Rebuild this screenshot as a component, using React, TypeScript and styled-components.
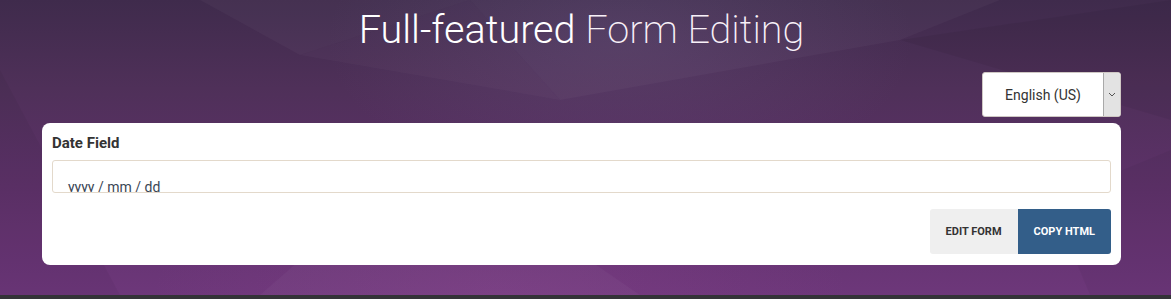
import styled, { createGlobalStyle } from "styled-components";

const GlobalStyle = createGlobalStyle`
  html, body {
    margin: 0;
    padding: 0;
    background: #343338;
  }
  * {
    box-sizing: border-box;
  }
`;

const Hero = styled.section`
  position: relative;
  height: 295px;
  padding: 0 50px 0 42px;
  overflow: hidden;
  background:
    radial-gradient(ellipse 420px 220px at 620px 40px, rgba(120, 100, 150, 0.22), transparent 70%),
    radial-gradient(ellipse 500px 200px at 500px 300px, rgba(150, 70, 150, 0.25), transparent 70%),
    linear-gradient(180deg, #3f2b4c 0%, #4f3059 30%, #5e316a 65%, #6d377a 100%);
  font-family: Roboto, "Liberation Sans", sans-serif;
`;

const Facets = styled.svg`
  position: absolute;
  inset: 0;
  width: 100%;
  height: 100%;
  pointer-events: none;
`;

const Content = styled.div`
  position: relative;
  display: flex;
  flex-direction: column;
`;

const Title = styled.h1`
  margin: 0;
  padding-top: 6px;
  text-align: center;
  font-size: 39.6px;
  line-height: 48px;
  font-weight: 300;
  color: #ffffff;
`;

const Accent = styled.span`
  font-weight: 200;
  color: #f8f0f8;
`;

const LangRow = styled.div`
  display: flex;
  justify-content: flex-end;
  margin-top: 18px;
`;

const LangSelect = styled.div`
  display: flex;
  width: 139px;
  height: 45px;
  background: #ffffff;
  border: 1px solid #cfc8c4;
  border-radius: 3px;
  overflow: hidden;
`;

const LangLabel = styled.div`
  flex: 1;
  display: flex;
  align-items: center;
  justify-content: center;
  font-size: 14px;
  color: #333333;
`;

const LangArrow = styled.div`
  width: 17px;
  display: flex;
  align-items: center;
  justify-content: center;
  background: #e3e3e3;
  border-left: 1px solid #a9a9a9;
`;

const Card = styled.div`
  margin-top: 6px;
  background: #ffffff;
  border-radius: 8px;
  padding: 12px 10px 11px 10px;
  display: flex;
  flex-direction: column;
`;

const FieldLabel = styled.label`
  font-size: 15px;
  font-weight: 700;
  color: #333333;
  line-height: 17px;
`;

const DateInput = styled.div`
  margin-top: 8px;
  height: 33px;
  border: 1px solid #e3d9cb;
  border-radius: 3px;
  padding: 18px 0 0 15px;
  overflow: hidden;
  font-size: 14px;
  line-height: 17px;
  color: #3a4655;
`;

const Actions = styled.div`
  display: flex;
  justify-content: flex-end;
  margin-top: 16px;
`;

const Button = styled.button<{ $primary?: boolean }>`
  height: 45px;
  border: none;
  padding: 0 16px;
  font-family: Roboto, "Liberation Sans", sans-serif;
  font-size: 11px;
  font-weight: 700;
  text-transform: uppercase;
  background: ${p => (p.$primary ? "#335e89" : "#efefef")};
  color: ${p => (p.$primary ? "#ffffff" : "#333333")};
  border-radius: ${p => (p.$primary ? "0 3px 3px 0" : "3px 0 0 3px")};
`;

const Footer = styled.div`
  height: 4px;
  background: #343338;
`;

export default function App() {
  return (
    <>
      <GlobalStyle />
      <Hero>
        <Facets viewBox="0 0 1171 295" preserveAspectRatio="none">
          <polygon points="200,0 470,0 300,55" fill="rgba(255,255,255,0.03)" />
          <polygon points="300,55 470,0 560,100" fill="rgba(255,255,255,0.025)" />
          <polygon points="560,100 900,40 1000,0 470,0" fill="rgba(255,255,255,0.03)" />
          <polygon points="0,70 120,295 0,295" fill="rgba(0,0,0,0.04)" />
          <polygon points="900,40 1171,0 1171,120" fill="rgba(0,0,0,0.05)" />
          <polygon points="1050,200 1171,150 1171,295 1090,295" fill="rgba(0,0,0,0.04)" />
          <polygon points="300,260 560,240 640,295 260,295" fill="rgba(255,255,255,0.03)" />
        </Facets>
        <Content>
          <Title>
            Full-featured <Accent>Form Editing</Accent>
          </Title>
          <LangRow>
            <LangSelect>
              <LangLabel>English (US)</LangLabel>
              <LangArrow>
                <svg width="8" height="5" viewBox="0 0 8 5">
                  <path d="M1 1 L4 4 L7 1" fill="none" stroke="#555" strokeWidth="1" />
                </svg>
              </LangArrow>
            </LangSelect>
          </LangRow>
          <Card>
            <FieldLabel>Date Field</FieldLabel>
            <DateInput>yyyy / mm / dd</DateInput>
            <Actions>
              <Button>Edit Form</Button>
              <Button $primary>Copy HTML</Button>
            </Actions>
          </Card>
        </Content>
      </Hero>
      <Footer />
    </>
  );
}
